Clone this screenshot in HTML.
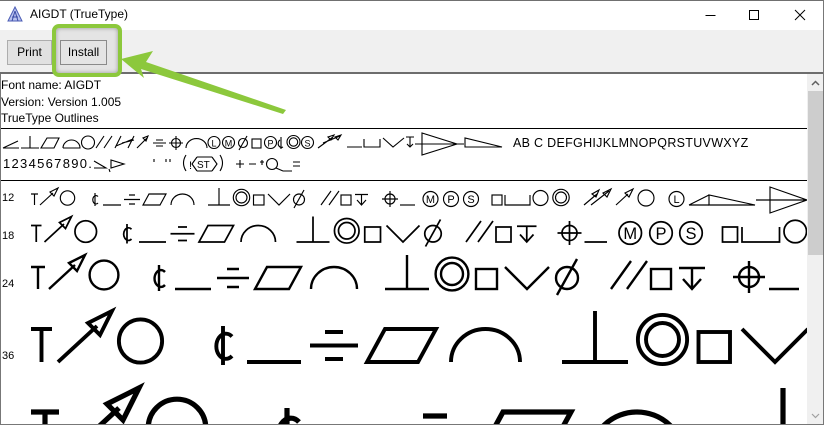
<!DOCTYPE html>
<html><head><meta charset="utf-8">
<style>
html,body{margin:0;padding:0;width:824px;height:425px;overflow:hidden;background:#fff;font-family:"Liberation Sans",sans-serif;}
.abs{position:absolute}
.t{font-size:12px;color:#000;white-space:nowrap}
</style></head><body>
<div class="abs" style="left:0;top:0;width:824px;height:425px;overflow:hidden">
<div class="abs" style="left:0;top:0;width:824px;height:30px;background:#fff;border-top:1px solid #707070;box-sizing:border-box"></div>
<svg class="abs" style="left:7px;top:6px" width="16" height="16" viewBox="0 0 16 16"><path d="M8 1 L15 15 L1 15 Z" fill="#b9c3ee" stroke="#4a5bb5" stroke-width="1"/><path d="M5 11 H11 M8 5 L5 15 M8 5 L11 15" stroke="#3a4aa5" stroke-width="1" fill="none"/></svg>
<div class="abs t" style="left:30px;top:7px">AIGDT (TrueType)</div>
<svg class="abs" style="left:690px;top:4px" width="130" height="22"><path d="M15.5 11.5 H25.5" stroke="#000" stroke-width="1"/><rect x="59.5" y="6.5" width="9" height="9" fill="none" stroke="#000"/><path d="M105 6 L115 16 M115 6 L105 16" stroke="#000" stroke-width="1"/></svg>
<div class="abs" style="left:0;top:30px;width:824px;height:42px;background:#f0f0f0"></div>
<div class="abs" style="left:0;top:72px;width:824px;height:2px;background:#6d6d6d"></div>
<div class="abs t" style="left:7px;top:40px;width:43px;height:23px;background:#e1e1e1;border:1px solid #adadad;text-align:center;line-height:23px">Print</div>
<div class="abs" style="left:52px;top:24px;width:62px;height:45px;border:4px solid #8cc83c;border-radius:7px;background:#e4e4e4;box-shadow:inset 0 0 4px rgba(0,0,0,.35)"></div>
<div class="abs t" style="left:60px;top:40px;width:45px;height:23px;border:1px solid #8a8a8a;text-align:center;line-height:23px">Install</div>
<svg class="abs" style="left:0;top:0" width="300" height="120"><polygon points="121,59 153,51 146,62 286,110 283,114 141,69 144,78" fill="#8cc83c"/></svg>
<div class="abs" style="left:0;top:74px;width:1px;height:351px;background:#777"></div>
<div class="abs t" style="left:1px;top:77px;line-height:16.5px">Font name: AIGDT<br>Version: Version 1.005<br>TrueType Outlines</div>
<div class="abs" style="left:1px;top:128px;width:806px;height:1px;background:#000"></div>
<div class="abs" style="left:1px;top:180px;width:806px;height:1px;background:#000"></div>
<div class="abs" style="left:513px;top:136px;font-size:12.5px;letter-spacing:0.3px;white-space:nowrap">AB C DEFGHIJKLMNOPQRSTUVWXYZ</div>
<div class="abs" style="left:3px;top:156px;font-size:13px;letter-spacing:1.3px;white-space:nowrap">1234567890.</div>
<svg class="abs" style="left:0;top:129px" width="807" height="51" fill="none" stroke="#000" stroke-width="1.1">
<g transform="translate(0,19)">
<path d="M3,0 H19 M3,0 L18,-7"/>
<path d="M21,0 H39 M30,0 V-12"/>
<path d="M41,0 H54 L59,-10 H47 Z"/>
<path d="M63,0 H80 A8.5,8 0 0 0 63,0"/>
<circle cx="88" cy="-5.5" r="6.5"/>
<path d="M96,0 L104,-12 M104,0 L112,-12"/>
<path d="M115,0 L121,-12 M122,-5 L134,-8 M116,-2 L133,-9 M128,0 L134,-12"/>
<path d="M137,0 L147,-10 M148,-12 L143,-10 L146,-7 Z"/>
<path d="M156,-8 H163 M153,-5 H166 M156,-2 H163"/>
<circle cx="176" cy="-5" r="4.5"/><path d="M169,-5 H183 M176,-12 V2"/>
<path d="M186,0 A10,9 0 0 1 207,0"/>
<circle cx="214" cy="-5.5" r="6"/><circle cx="228.5" cy="-5.5" r="6"/>
<circle cx="243" cy="-5" r="4.5"/><path d="M247,-12 L239,2"/>
<rect x="252" y="-9" width="9" height="9"/>
<circle cx="270.5" cy="-5.5" r="6"/>
<path d="M280,-8 A3,3.5 0 1 0 283,-1 M281,-11 V1"/>
<circle cx="293.5" cy="-6" r="6.5"/><circle cx="293.5" cy="-6" r="4.2"/>
<circle cx="307.5" cy="-5.5" r="6"/>
<path d="M318,0 L333,-11 M323,-5 L340,-12 M334,-13 L328,-11 L331,-8 Z M341,-13 L335,-11 L338,-8 Z"/>
<path d="M347,-1 H362 M364,-9 V-1 H380 V-9 M383,-10 L393,-1 L404,-10 M406,-11 H414 M410,-11 V-1 M407,-4 L410,-1 L413,-4"/>
<path d="M415,-4 H464 M422,-15 V7 L457,-4 Z"/>
<path d="M465,-10 V-1 H502 Z"/>
<g stroke="none" fill="#000" font-family="Liberation Sans" font-size="9" text-anchor="middle">
<text x="214" y="-1.5">L</text><text x="228.5" y="-1.5">M</text><text x="270.5" y="-1.5">P</text><text x="307.5" y="-1.5">S</text>
</g>
</g>
<g transform="translate(0,40)">
<path d="M94,-1 H106 L94,-8 M109,0 L110,3 M111,-1 V-9 L124,-5 Z"/>
<path d="M154,-10 V-7 M166,-10 V-7 M170,-10 V-7"/>
<path d="M186,-14 Q181,-6 186,2 M197,-12 L192,-5 L197,2 M212,-12 L217,-5 L212,2 M220,-14 Q225,-6 220,2 M197,-12 H212 M197,2 H212"/>
<text x="189" y="0" font-size="11" stroke="none" fill="#000" font-family="Liberation Sans">!</text>
<text x="197" y="-1" font-size="10" stroke="none" fill="#000" font-family="Liberation Sans">ST</text>
<path d="M236,-5 H244 M240,-9 V-1 M249,-5 H256 M262,-9 L262,-4 M260,-7 H264"/>
<circle cx="272" cy="-5" r="5.5"/><path d="M276,-1 L283,2 H292 M293,-7 H300 M293,-3 H300"/>
</g>
</svg>
<div class="abs" style="left:2px;top:192px;font-size:11px">12</div>
<div class="abs" style="left:2px;top:230px;font-size:11px">18</div>
<div class="abs" style="left:2px;top:278px;font-size:11px">24</div>
<div class="abs" style="left:2px;top:350px;font-size:11px">36</div>
<svg class="abs" style="left:0;top:181px" width="807" height="244" fill="none" stroke="#000">
<g transform="translate(31,24) scale(1)" stroke-width="1.15">
<path d="M0,-11 H7 M3.5,-11 V0"/>
<path d="M9,0 L22,-12 M27,-17 L19,-13 L23,-9 Z"/>
<circle cx="36.5" cy="-7" r="7.2"/>
<path d="M67,-8.5 A3.2,4.2 0 1 0 67,-2 M64,-12 V1"/>
<path d="M72,0 H90"/>
<path d="M98,-10 H104 M93,-5.5 H109 M98,-1 H104"/>
<path d="M112,0 H129 L135,-11 H118 Z"/>
<path d="M140,0 A11.5,11 0 0 1 163,0"/>
<path d="M177,0 H199 M188,0 V-17"/>
<circle cx="210.5" cy="-7.5" r="8.2"/><circle cx="210.5" cy="-7.5" r="5.5"/>
<rect x="222.5" y="-10" width="10.5" height="10"/>
<path d="M237,-11 L248,0 L259,-11"/>
<circle cx="268" cy="-5.5" r="5.5"/><path d="M273,-15 L263,3"/>
<path d="M290,0 L300,-14 M298,0 L308,-14"/>
<rect x="310" y="-10" width="10" height="10"/>
<path d="M324,-10.5 H337 M330.5,-10.5 V0 M326,-5 L330.5,0 L335,-5"/>
<circle cx="359" cy="-6" r="5"/><path d="M351,-6 H367 M359,-14 V2"/>
<path d="M369,0 H384"/>
<circle cx="399.5" cy="-6" r="7.5"/><circle cx="420" cy="-6" r="7.5"/><circle cx="440" cy="-6" r="7.5"/>
<rect x="461" y="-10" width="10" height="10"/>
<path d="M474,-10 V0 H499 V-10"/>
<circle cx="509.5" cy="-7" r="7.5"/>
<circle cx="530" cy="-7.5" r="8.2"/><circle cx="530" cy="-7.5" r="5.5"/>
<path d="M553,0 L566,-11 M560,0 L578,-14 M568,-15 L561,-11 L565,-8 Z M580,-16 L572,-12 L576,-8 Z"/>
<path d="M585,0 L597,-11 M602,-16 L594,-12 L598,-8 Z"/>
<circle cx="615" cy="-7" r="8"/>
<circle cx="645.5" cy="-6" r="7.5"/>
<path d="M658,0 L678,-10 M658,0 H678"/>
<path d="M678,-10 V0 H724 Z"/>
<path d="M725,-5 H776 M739,-18 V8 L776,-5 Z"/>
<g stroke="none" fill="#000" font-family="Liberation Sans" font-size="11" text-anchor="middle">
<text x="399.5" y="-2">M</text><text x="420" y="-2">P</text><text x="440" y="-2">S</text><text x="645.5" y="-2">L</text>
</g>
</g>
<g transform="translate(31,61) scale(1.5)" stroke-width="1.15">
<path d="M0,-11 H7 M3.5,-11 V0"/>
<path d="M9,0 L22,-12 M27,-17 L19,-13 L23,-9 Z"/>
<circle cx="36.5" cy="-7" r="7.2"/>
<path d="M67,-8.5 A3.2,4.2 0 1 0 67,-2 M64,-12 V1"/>
<path d="M72,0 H90"/>
<path d="M98,-10 H104 M93,-5.5 H109 M98,-1 H104"/>
<path d="M112,0 H129 L135,-11 H118 Z"/>
<path d="M140,0 A11.5,11 0 0 1 163,0"/>
<path d="M177,0 H199 M188,0 V-17"/>
<circle cx="210.5" cy="-7.5" r="8.2"/><circle cx="210.5" cy="-7.5" r="5.5"/>
<rect x="222.5" y="-10" width="10.5" height="10"/>
<path d="M237,-11 L248,0 L259,-11"/>
<circle cx="268" cy="-5.5" r="5.5"/><path d="M273,-15 L263,3"/>
<path d="M290,0 L300,-14 M298,0 L308,-14"/>
<rect x="310" y="-10" width="10" height="10"/>
<path d="M324,-10.5 H337 M330.5,-10.5 V0 M326,-5 L330.5,0 L335,-5"/>
<circle cx="359" cy="-6" r="5"/><path d="M351,-6 H367 M359,-14 V2"/>
<path d="M369,0 H384"/>
<circle cx="399.5" cy="-6" r="7.5"/><circle cx="420" cy="-6" r="7.5"/><circle cx="440" cy="-6" r="7.5"/>
<rect x="461" y="-10" width="10" height="10"/>
<path d="M474,-10 V0 H499 V-10"/>
<circle cx="509.5" cy="-7" r="7.5"/>
<g stroke="none" fill="#000" font-family="Liberation Sans" font-size="11" text-anchor="middle">
<text x="399.5" y="-2">M</text><text x="420" y="-2">P</text><text x="440" y="-2">S</text>
</g>
</g>
<g transform="translate(31,108) scale(2)" stroke-width="1.2">
<path d="M0,-11 H7 M3.5,-11 V0"/>
<path d="M9,0 L22,-12 M27,-17 L19,-13 L23,-9 Z"/>
<circle cx="36.5" cy="-7" r="7.2"/>
<path d="M67,-8.5 A3.2,4.2 0 1 0 67,-2 M64,-12 V1"/>
<path d="M72,0 H90"/>
<path d="M98,-10 H104 M93,-5.5 H109 M98,-1 H104"/>
<path d="M112,0 H129 L135,-11 H118 Z"/>
<path d="M140,0 A11.5,11 0 0 1 163,0"/>
<path d="M177,0 H199 M188,0 V-17"/>
<circle cx="210.5" cy="-7.5" r="8.2"/><circle cx="210.5" cy="-7.5" r="5.5"/>
<rect x="222.5" y="-10" width="10.5" height="10"/>
<path d="M237,-11 L248,0 L259,-11"/>
<circle cx="268" cy="-5.5" r="5.5"/><path d="M273,-15 L263,3"/>
<path d="M290,0 L300,-14 M298,0 L308,-14"/>
<rect x="310" y="-10" width="10" height="10"/>
<path d="M324,-10.5 H337 M330.5,-10.5 V0 M326,-5 L330.5,0 L335,-5"/>
<circle cx="359" cy="-6" r="5"/><path d="M351,-6 H367 M359,-14 V2"/>
<path d="M369,0 H384"/>
</g>
<g transform="translate(31,181) scale(3)" stroke-width="1.3">
<path d="M0,-11 H7 M3.5,-11 V0"/>
<path d="M9,0 L22,-12 M27,-17 L19,-13 L23,-9 Z"/>
<circle cx="36.5" cy="-7" r="7.2"/>
<path d="M67,-8.5 A3.2,4.2 0 1 0 67,-2 M64,-12 V1"/>
<path d="M72,0 H90"/>
<path d="M98,-10 H104 M93,-5.5 H109 M98,-1 H104"/>
<path d="M112,0 H129 L135,-11 H118 Z"/>
<path d="M140,0 A11.5,11 0 0 1 163,0"/>
<path d="M177,0 H199 M188,0 V-17"/>
<circle cx="210.5" cy="-7.5" r="8.2"/><circle cx="210.5" cy="-7.5" r="5.5"/>
<rect x="222.5" y="-10" width="10.5" height="10"/>
<path d="M237,-11 L248,0 L259,-11"/>
</g>
<g transform="translate(31,275) scale(4)" stroke-width="1.3">
<path d="M0,-11 H7 M3.5,-11 V0"/>
<path d="M9,0 L22,-12 M27,-17 L19,-13 L23,-9 Z"/>
<circle cx="36.5" cy="-7" r="7.2"/>
<path d="M67,-8.5 A3.2,4.2 0 1 0 67,-2 M64,-12 V1"/>
<path d="M72,0 H90"/>
<path d="M98,-10 H104 M93,-5.5 H109 M98,-1 H104"/>
<path d="M112,0 H129 L135,-11 H118 Z"/>
<path d="M140,0 A11.5,11 0 0 1 163,0"/>
<path d="M177,0 H199 M188,0 V-17"/>
</g>
</svg>
<div class="abs" style="left:807px;top:74px;width:17px;height:351px;background:#f0f0f0"></div>
<div class="abs" style="left:808px;top:91px;width:15px;height:164px;background:#cdcdcd"></div>
<svg class="abs" style="left:807px;top:74px" width="17" height="351"><path d="M5 11 L8.5 7.5 L12 11" stroke="#606060" stroke-width="1.5" fill="none"/><path d="M5 340 L8.5 343.5 L12 340" stroke="#a0a0a0" stroke-width="1.2" fill="none"/></svg>
<div class="abs" style="left:823px;top:0;width:1px;height:425px;background:#777"></div>
<div class="abs" style="left:0;top:424px;width:824px;height:1px;background:#777"></div>
</div>
</body></html>
